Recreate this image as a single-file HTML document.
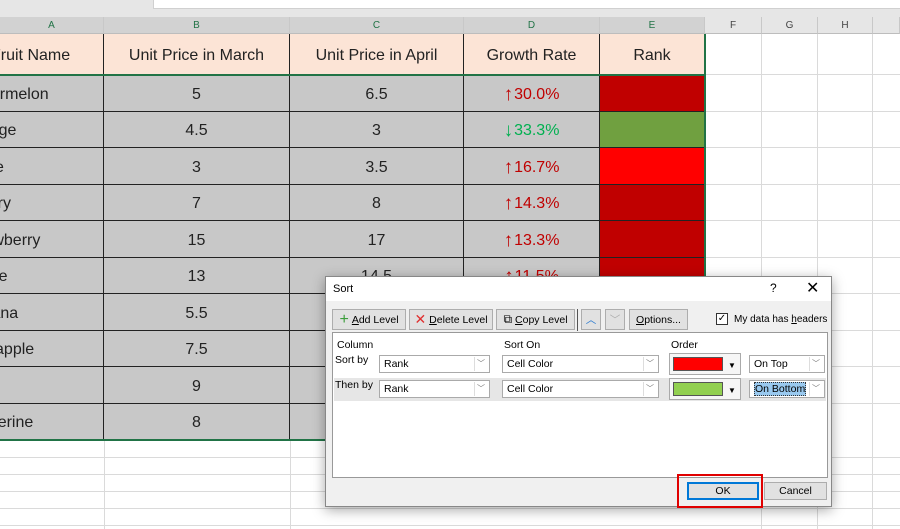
<!DOCTYPE html>
<html><head><style>
*{box-sizing:border-box;margin:0;padding:0}
html,body{width:900px;height:529px;overflow:hidden}
body{background:#fff;font-family:"Liberation Sans",sans-serif;position:relative}
.abs{position:absolute}
.top{left:0;top:0;width:900px;height:17px;background:#e6e6e6}
.fb{left:153px;top:0;width:747px;height:9px;background:#fff;border-bottom:1px solid #d0d0d0;border-left:1px solid #d0d0d0}
.ch{top:17px;height:17px;background:#e6e6e6;border-right:1px solid #c8c8c8;border-bottom:1px solid #bdbdbd;font-size:10px;color:#444;text-align:center;line-height:17px}
.chs{background:#d2d2d2;color:#217346}
.vl{top:34px;width:1px;height:495px;background:#dadada}
.hl{left:0;width:900px;height:1px;background:#dadada}
.cell{position:absolute;border-right:1px solid #222;border-bottom:1px solid #222;font-size:16px;color:#222;display:flex;align-items:center;justify-content:center;padding-top:3px;overflow:hidden;white-space:nowrap}
.hdr{background:#fce4d6}
.g{background:#c8c8c8}
.red{color:#c00000}.grn{color:#00b050}
.dlg{left:325px;top:276px;width:507px;height:231px;background:#f0f0f0;border:1px solid #888;box-shadow:0 3px 12px rgba(0,0,0,.35);font-size:11px;color:#000}
.btn{position:absolute;height:21px;border:1px solid #adadad;background:#e1e1e1;font-size:10.5px;display:flex;align-items:center;justify-content:center;white-space:nowrap}
.sel{position:absolute;height:18px;border:1px solid #aaa;background:#fff;font-size:10.5px;padding-left:4px;line-height:16px}
.sel .dd{position:absolute;right:2px;top:1px;width:13px;height:14px;border-left:1px solid #ddd;color:#777;font-size:8px;text-align:center;line-height:14px}
</style></head><body>
<div class="abs top"></div><div class="abs fb"></div>
<div class="abs ch chs" style="left:0;width:104px">A</div>
<div class="abs ch chs" style="left:104px;width:186px">B</div>
<div class="abs ch chs" style="left:290px;width:174px">C</div>
<div class="abs ch chs" style="left:464px;width:136px">D</div>
<div class="abs ch chs" style="left:600px;width:105px">E</div>
<div class="abs ch" style="left:705px;width:57px">F</div>
<div class="abs ch" style="left:762px;width:56px">G</div>
<div class="abs ch" style="left:818px;width:55px">H</div>
<div class="abs ch" style="left:873px;width:27px"></div>
<div class="abs vl" style="left:761px"></div><div class="abs vl" style="left:817px"></div><div class="abs vl" style="left:872px"></div>
<div class="abs vl" style="left:104px;top:440px;height:89px"></div><div class="abs vl" style="left:290px;top:440px;height:89px"></div>
<div class="abs hl" style="top:74px"></div><div class="abs hl" style="top:111px"></div><div class="abs hl" style="top:147px"></div><div class="abs hl" style="top:184px"></div><div class="abs hl" style="top:220px"></div><div class="abs hl" style="top:257px"></div><div class="abs hl" style="top:293px"></div><div class="abs hl" style="top:330px"></div><div class="abs hl" style="top:366px"></div><div class="abs hl" style="top:403px"></div>
<div class="abs hl" style="top:457px"></div><div class="abs hl" style="top:474px"></div><div class="abs hl" style="top:491px"></div><div class="abs hl" style="top:508px"></div><div class="abs hl" style="top:525px"></div>
<div class="cell hdr" style="left:0;top:34px;width:104px;height:41px;justify-content:flex-start"><span style="margin-left:-9px">Fruit Name</span></div>
<div class="cell hdr" style="left:104px;top:34px;width:186px;height:41px">Unit Price in March</div>
<div class="cell hdr" style="left:290px;top:34px;width:174px;height:41px">Unit Price in April</div>
<div class="cell hdr" style="left:464px;top:34px;width:136px;height:41px">Growth Rate</div>
<div class="cell hdr" style="left:600px;top:34px;width:105px;height:41px">Rank</div>
<div id="rows"></div>
<div class="abs" style="left:0;top:74px;width:706px;height:2px;background:#217346"></div>
<div class="abs" style="left:0;top:439px;width:706px;height:2px;background:#217346"></div>
<div class="abs" style="left:704px;top:34px;width:2px;height:407px;background:#217346"></div>
<script>
var d=[["Watermelon","5","6.5","↑30.0%","#c00000",0],["Orange","4.5","3","↓33.3%","#70a040",1],["Apple","3","3.5","↑16.7%","#ff0000",0],["Cherry","7","8","↑14.3%","#c00000",0],["Strawberry","15","17","↑13.3%","#c00000",0],["Grape","13","14.5","↑11.5%","#c00000",0],["Banana","5.5","6","↑9.1%","#c00000",0],["Pineapple","7.5","8","↑6.7%","#ff0000",0],["Kiwi","9","9.5","↑5.6%","#ff0000",0],["Tangerine","8","8.4","↑5.0%","#ff0000",0]];
var y=[75,112,148,185,221,258,294,331,367,404,440],h="";
d.forEach(function(r,i){var t=y[i],hh=y[i+1]-t;
h+='<div class="cell g" style="left:0;top:'+t+'px;width:104px;height:'+hh+'px;justify-content:flex-start"><span style="margin-left:-37px">'+r[0]+'</span></div>';
h+='<div class="cell g" style="left:104px;top:'+t+'px;width:186px;height:'+hh+'px">'+r[1]+'</div>';
h+='<div class="cell g" style="left:290px;top:'+t+'px;width:174px;height:'+hh+'px">'+r[2]+'</div>';
h+='<div class="cell g '+(r[5]?'grn':'red')+'" style="left:464px;top:'+t+'px;width:136px;height:'+hh+'px"><span style="font-size:19px;margin-right:1px">'+r[3][0]+'</span>'+r[3].slice(1)+'</div>';
h+='<div class="cell" style="left:600px;top:'+t+'px;width:105px;height:'+hh+'px;background:'+r[4]+'"></div>';});
document.getElementById('rows').innerHTML=h;
</script>
<div class="abs dlg">
<div class="abs" style="left:0;top:0;width:505px;height:24px;background:#fff"></div>
<div class="abs" style="left:7px;top:6px;font-size:11px">Sort</div>
<div class="abs" style="left:444px;top:4px;font-size:12px">?</div>
<div class="abs" style="left:480px;top:1px;font-size:16px">✕</div>
<div class="btn" style="left:6px;top:32px;width:74px"><span style="color:#3a9d3a;font-size:16px;margin-right:3px">+</span><u>A</u>dd Level</div>
<div class="btn" style="left:83px;top:32px;width:84px"><span style="color:#e03030;font-size:14px;margin-right:3px">✕</span><u>D</u>elete Level</div>
<div class="btn" style="left:170px;top:32px;width:79px"><span style="font-size:12px;margin-right:3px">⧉</span><u>C</u>opy Level</div>
<div class="abs" style="left:251px;top:32px;width:1px;height:22px;background:#555"></div>
<div class="btn" style="left:255px;top:32px;width:20px;color:#2a7ad0">︿</div>
<div class="btn" style="left:279px;top:32px;width:20px;color:#aaa">﹀</div>
<div class="btn" style="left:303px;top:32px;width:59px"><u>O</u>ptions...</div>
<div class="abs" style="left:390px;top:36px;width:12px;height:12px;border:1px solid #333;background:#fff;font-size:10px;line-height:10px;text-align:center">✓</div>
<div class="abs" style="left:408px;top:37px;font-size:10px;white-space:nowrap">My data has <u>h</u>eaders</div>
<div class="abs" style="left:6px;top:55px;width:496px;height:146px;background:#fff;border:1px solid #999"></div>
<div class="abs" style="left:8px;top:101px;width:492px;height:23px;background:#e6e6e6"></div>
<div class="abs" style="left:11px;top:62px;font-size:10.5px">Column</div>
<div class="abs" style="left:178px;top:62px;font-size:10.5px">Sort On</div>
<div class="abs" style="left:345px;top:62px;font-size:10.5px">Order</div>
<div class="abs" style="left:9px;top:77px;font-size:10.5px">Sort by</div>
<div class="abs" style="left:9px;top:102px;font-size:10.5px">Then by</div>
<div class="sel" style="left:53px;top:78px;width:111px">Rank<div class="dd">﹀</div></div>
<div class="sel" style="left:176px;top:78px;width:157px">Cell Color<div class="dd">﹀</div></div>
<div class="sel" style="left:53px;top:103px;width:111px">Rank<div class="dd">﹀</div></div>
<div class="sel" style="left:176px;top:103px;width:157px">Cell Color<div class="dd">﹀</div></div>
<div class="abs" style="left:343px;top:76px;width:72px;height:22px;border:1px solid #aaa;background:#f6f6f6"><div class="abs" style="left:3px;top:3px;width:50px;height:14px;background:#ff0000;border:1px solid #555"></div><div class="abs" style="left:58px;top:7px;font-size:8px">▼</div></div>
<div class="abs" style="left:343px;top:101px;width:72px;height:22px;border:1px solid #aaa;background:#f6f6f6"><div class="abs" style="left:3px;top:3px;width:50px;height:14px;background:#92d050;border:1px solid #555"></div><div class="abs" style="left:58px;top:7px;font-size:8px">▼</div></div>
<div class="sel" style="left:423px;top:78px;width:76px">On Top<div class="dd">﹀</div></div>
<div class="sel" style="left:423px;top:103px;width:76px"><span style="background:#99c9ef;border:1px dotted #333">On Bottom</span><div class="dd">﹀</div></div>
<div class="abs" style="left:351px;top:197px;width:86px;height:34px;border:2px solid #e00000"></div>
<div class="btn" style="left:361px;top:205px;width:72px;height:18px;border:1px solid #0078d7;box-shadow:inset 0 0 0 1px #0078d7">OK</div>
<div class="btn" style="left:438px;top:205px;width:63px;height:18px">Cancel</div>
</div>
</body></html>
